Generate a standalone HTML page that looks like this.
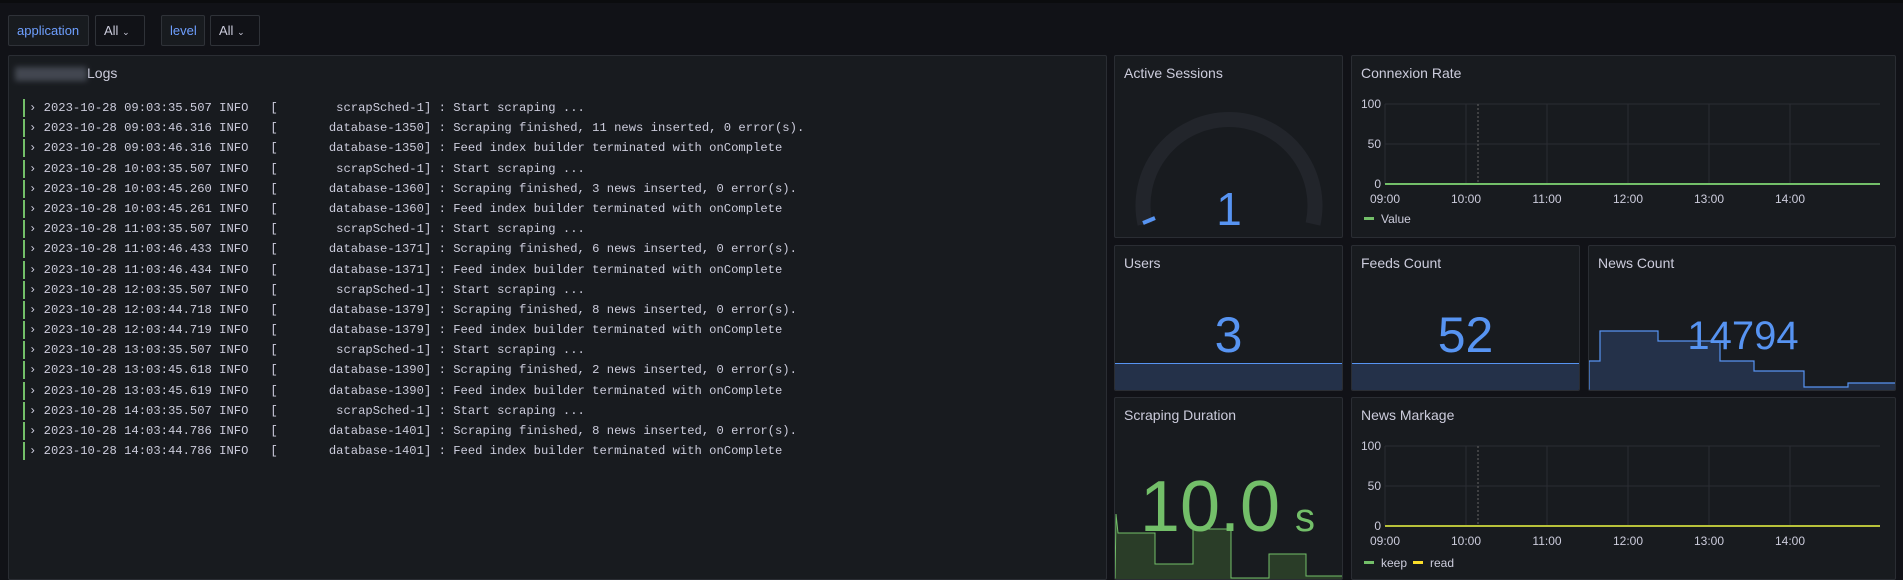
<!DOCTYPE html>
<html><head><meta charset="utf-8"><style>
*{margin:0;padding:0;box-sizing:border-box}
body{width:1903px;height:580px;background:#111217;overflow:hidden;position:relative;font-family:"Liberation Sans",sans-serif;color:#ccccdc}
.p{position:absolute;background:#181b1f;border:1px solid #2a2d33;border-radius:2px;overflow:hidden}
.t{position:absolute;left:9px;top:9px;font-size:14px;color:#ccccdc;font-weight:500}
.v{position:absolute;border:1px solid #2f3238;border-radius:2px;height:31px;top:15px;font-size:13px;line-height:29px;padding:0 8px;background:#111217}
.log{position:absolute;left:14px;top:43px;font-family:"Liberation Mono",monospace;font-size:12.2px;color:#ccccdc}
.log div{white-space:pre;height:18px;line-height:18px;margin-bottom:2.2px;border-left:2px solid #73bf69;padding-left:4px}
svg text{font-family:"Liberation Sans",sans-serif}
</style></head><body>
<div style="position:absolute;left:0;top:0;width:1903px;height:3px;background:#0b0c0e"></div>
<div class="v" style="left:8px;width:81px;color:#6e9fff;background:#181b1f">application</div>
<div class="v" style="left:95px;width:50px;color:#ccccdc">All <span style="font-size:9px">&#8964;</span></div>
<div class="v" style="left:161px;width:44px;color:#6e9fff;background:#181b1f">level</div>
<div class="v" style="left:210px;width:50px;color:#ccccdc">All <span style="font-size:9px">&#8964;</span></div>

<div class="p" style="left:8px;top:55px;width:1099px;height:525px">
<div class="t" style="left:6px"><span style="display:inline-block;width:72px;height:14px;background:#555a66;filter:blur(3px);vertical-align:middle;opacity:.7"></span>Logs</div>
<div class="log"><div>› 2023-10-28 09:03:35.507 INFO   [        scrapSched-1] : Start scraping ...</div><div>› 2023-10-28 09:03:46.316 INFO   [       database-1350] : Scraping finished, 11 news inserted, 0 error(s).</div><div>› 2023-10-28 09:03:46.316 INFO   [       database-1350] : Feed index builder terminated with onComplete</div><div>› 2023-10-28 10:03:35.507 INFO   [        scrapSched-1] : Start scraping ...</div><div>› 2023-10-28 10:03:45.260 INFO   [       database-1360] : Scraping finished, 3 news inserted, 0 error(s).</div><div>› 2023-10-28 10:03:45.261 INFO   [       database-1360] : Feed index builder terminated with onComplete</div><div>› 2023-10-28 11:03:35.507 INFO   [        scrapSched-1] : Start scraping ...</div><div>› 2023-10-28 11:03:46.433 INFO   [       database-1371] : Scraping finished, 6 news inserted, 0 error(s).</div><div>› 2023-10-28 11:03:46.434 INFO   [       database-1371] : Feed index builder terminated with onComplete</div><div>› 2023-10-28 12:03:35.507 INFO   [        scrapSched-1] : Start scraping ...</div><div>› 2023-10-28 12:03:44.718 INFO   [       database-1379] : Scraping finished, 8 news inserted, 0 error(s).</div><div>› 2023-10-28 12:03:44.719 INFO   [       database-1379] : Feed index builder terminated with onComplete</div><div>› 2023-10-28 13:03:35.507 INFO   [        scrapSched-1] : Start scraping ...</div><div>› 2023-10-28 13:03:45.618 INFO   [       database-1390] : Scraping finished, 2 news inserted, 0 error(s).</div><div>› 2023-10-28 13:03:45.619 INFO   [       database-1390] : Feed index builder terminated with onComplete</div><div>› 2023-10-28 14:03:35.507 INFO   [        scrapSched-1] : Start scraping ...</div><div>› 2023-10-28 14:03:44.786 INFO   [       database-1401] : Scraping finished, 8 news inserted, 0 error(s).</div><div>› 2023-10-28 14:03:44.786 INFO   [       database-1401] : Feed index builder terminated with onComplete</div></div></div>

<!-- Active sessions -->
<div class="p" style="left:1114px;top:55px;width:229px;height:183px">
<div class="t">Active Sessions</div>
<svg width="229" height="183" style="position:absolute;left:0;top:0">
<path d="M30 168 A86 86 0 1 1 198 168" fill="none" stroke="#22252b" stroke-width="15"/>
<path d="M28 167 L40 162" stroke="#5794f2" stroke-width="4"/>
<text x="114" y="169" font-size="46" fill="#5794f2" text-anchor="middle">1</text>
</svg></div>

<!-- Connexion rate -->
<div class="p" style="left:1351px;top:55px;width:545px;height:183px">
<div class="t">Connexion Rate</div>
<svg width="545" height="183" style="position:absolute;left:0;top:0">
<g stroke="#2a2d33" stroke-width="1">
<line x1="33" y1="48" x2="528" y2="48"/><line x1="33" y1="88" x2="528" y2="88"/>
<line x1="33" y1="48" x2="33" y2="128"/><line x1="114" y1="48" x2="114" y2="128"/><line x1="195" y1="48" x2="195" y2="128"/><line x1="276" y1="48" x2="276" y2="128"/><line x1="357" y1="48" x2="357" y2="128"/><line x1="438" y1="48" x2="438" y2="128"/>
</g>
<line x1="126" y1="48" x2="126" y2="128" stroke="#666" stroke-dasharray="2,2"/>
<line x1="33" y1="128" x2="528" y2="128" stroke="#73bf69" stroke-width="2"/>
<g font-size="12" fill="#ccccdc"><text x="29" y="52" text-anchor="end">100</text><text x="29" y="92" text-anchor="end">50</text><text x="29" y="132" text-anchor="end">0</text>
<text x="33" y="147" text-anchor="middle">09:00</text><text x="114" y="147" text-anchor="middle">10:00</text><text x="195" y="147" text-anchor="middle">11:00</text><text x="276" y="147" text-anchor="middle">12:00</text><text x="357" y="147" text-anchor="middle">13:00</text><text x="438" y="147" text-anchor="middle">14:00</text>
<rect x="12" y="161" width="10" height="3" fill="#73bf69"/><text x="29" y="167">Value</text></g>
</svg></div>

<!-- Users -->
<div class="p" style="left:1114px;top:245px;width:229px;height:146px">
<div class="t">Users</div>
<div style="position:absolute;left:0;bottom:0;width:100%;height:27px;background:#243149;border-top:1px solid #5794f2"></div>
<div style="position:absolute;left:0;width:100%;top:60px;text-align:center;font-size:50px;color:#5794f2">3</div>
</div>
<div class="p" style="left:1351px;top:245px;width:229px;height:146px">
<div class="t">Feeds Count</div>
<div style="position:absolute;left:0;bottom:0;width:100%;height:27px;background:#243149;border-top:1px solid #5794f2"></div>
<div style="position:absolute;left:0;width:100%;top:60px;text-align:center;font-size:50px;color:#5794f2">52</div>
</div>
<div class="p" style="left:1588px;top:245px;width:308px;height:146px">
<div class="t">News Count</div>
<svg width="308" height="146" style="position:absolute;left:0;top:0">
<path d="M0 115 L11 115 L11 85 L69 85 L69 95 L131 95 L131 115 L165 115 L165 125 L215 125 L215 141 L259 141 L259 137 L308 137 L308 146 L0 146Z" fill="#243149" stroke="#5794f2" stroke-width="1.2"/>
<text x="154" y="103" font-size="40" fill="#5794f2" text-anchor="middle">14794</text>
</svg></div>

<!-- Scraping -->
<div class="p" style="left:1114px;top:397px;width:229px;height:183px">
<div class="t">Scraping Duration</div>
<svg width="229" height="183" style="position:absolute;left:0;top:0">
<path d="M1 116 L3 135 L40 135 L40 166 L78 166 L78 131 L116 131 L116 180 L154 180 L154 156 L191 156 L191 178 L229 178 L229 183 L0 183Z" fill="#2a3d28" stroke="#73bf69" stroke-width="1"/>
<text x="95" y="133" font-size="72" fill="#73bf69" text-anchor="middle">10.0</text>
<text x="180" y="133" font-size="40" fill="#73bf69">s</text>
</svg></div>

<!-- News markage -->
<div class="p" style="left:1351px;top:397px;width:545px;height:183px">
<div class="t">News Markage</div>
<svg width="545" height="183" style="position:absolute;left:0;top:0">
<g stroke="#2a2d33" stroke-width="1">
<line x1="33" y1="48" x2="528" y2="48"/><line x1="33" y1="88" x2="528" y2="88"/>
<line x1="33" y1="48" x2="33" y2="128"/><line x1="114" y1="48" x2="114" y2="128"/><line x1="195" y1="48" x2="195" y2="128"/><line x1="276" y1="48" x2="276" y2="128"/><line x1="357" y1="48" x2="357" y2="128"/><line x1="438" y1="48" x2="438" y2="128"/>
</g>
<line x1="126" y1="48" x2="126" y2="128" stroke="#666" stroke-dasharray="2,2"/>
<line x1="33" y1="128" x2="528" y2="128" stroke="#b8c23a" stroke-width="2"/>
<g font-size="12" fill="#ccccdc"><text x="29" y="52" text-anchor="end">100</text><text x="29" y="92" text-anchor="end">50</text><text x="29" y="132" text-anchor="end">0</text>
<text x="33" y="147" text-anchor="middle">09:00</text><text x="114" y="147" text-anchor="middle">10:00</text><text x="195" y="147" text-anchor="middle">11:00</text><text x="276" y="147" text-anchor="middle">12:00</text><text x="357" y="147" text-anchor="middle">13:00</text><text x="438" y="147" text-anchor="middle">14:00</text>
<rect x="12" y="163" width="10" height="3" fill="#73bf69"/><text x="29" y="169">keep</text>
<rect x="61" y="163" width="10" height="3" fill="#fade2a"/><text x="78" y="169">read</text></g>
</svg></div>
</body></html>
